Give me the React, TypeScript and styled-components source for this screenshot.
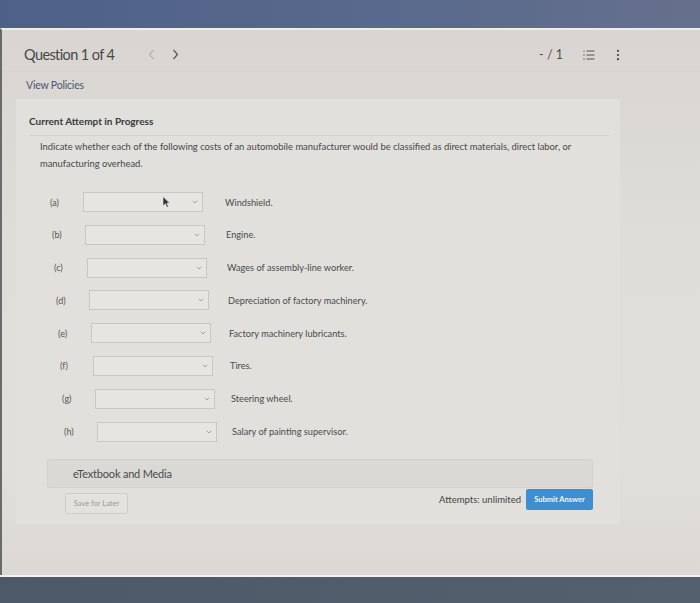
import React from "react";
import styled, { createGlobalStyle } from "styled-components";

const Global = createGlobalStyle`
  html, body { margin: 0; padding: 0; }
  body { width: 700px; height: 603px; overflow: hidden; font-family: Lato, "Open Sans", sans-serif; }
  #root { width: 700px; height: 603px; }
`;

const Page = styled.div`
  display: flex;
  flex-direction: column;
  width: 700px;
  height: 603px;
  background: #4f5b6b;
`;

const TopBezel = styled.div`
  height: 28px;
  flex: none;
  background: linear-gradient(to right, #4f6088, #5a6a8d 60%, #65708c);
`;

const Screen = styled.div`
  flex: none;
  height: 547px;
  box-sizing: border-box;
  border-top: 2px solid #eeedea;
  border-left: 2px solid #6a6a6a;
  background: linear-gradient(to bottom, #d9d6d2, #dfddd9 40%, #e1dfda 80%, #dcd9d4);
  display: flex;
  flex-direction: column;
`;

const BottomBezel = styled.div`
  flex: 1;
  border-top: 2px solid #f2f2f0;
  background: linear-gradient(to right, #4d5868, #55606f);
`;

const Header = styled.div`
  display: flex;
  align-items: center;
  height: 42px;
  box-sizing: border-box;
  padding: 8px 80px 0 22px;
  border-bottom: 1px solid #d8d5d1;
`;

const Title = styled.div`
  font-size: 14.5px;
  color: #474747;
  letter-spacing: -0.6px;
`;

const NavArrow = styled.span<{ $dim?: boolean }>`
  display: inline-flex;
  margin-left: ${(p) => (p.$dim ? "34px" : "17px")};
  color: ${(p) => (p.$dim ? "#aaa" : "#555")};
`;

const HeaderRight = styled.div`
  margin-left: auto;
  display: flex;
  align-items: center;
  color: #555;
`;

const Score = styled.span`
  font-size: 12.5px;
  color: #505050;
`;

const IconSlot = styled.span<{ $gap: number }>`
  display: inline-flex;
  margin-left: ${(p) => p.$gap}px;
`;

const Policies = styled.div`
  margin: 6px 0 0 24px;
  font-size: 10.5px;
  line-height: 14px;
  color: #4c5670;
  letter-spacing: -0.2px;
`;

const Card = styled.div`
  margin: 7px 80px 0 14px;
  padding: 15px 0 0 13px;
  background: #e2e0dc;
  height: 410px;
`;

const CardTitle = styled.div`
  font-size: 10px;
  font-weight: 700;
  line-height: 14px;
  color: #3a3a3a;
  padding-bottom: 7px;
  border-bottom: 1px solid #d6d3cf;
  margin-right: 10px;
`;

const Prompt = styled.div`
  margin: 2px 20px 0 11px;
  font-size: 9.4px;
  line-height: 17px;
  color: #474747;
`;

const Rows = styled.div`
  display: flex;
  flex-direction: column;
  gap: 12.8px;
  margin-top: 20px;
`;

const Row = styled.div<{ $shift: number }>`
  display: grid;
  grid-template-columns: 33px 120px auto;
  align-items: center;
  height: 20px;
  padding-left: ${(p) => 21 + p.$shift}px;
`;

const Label = styled.span`
  font-size: 9px;
  color: #555;
`;

const Select = styled.div`
  position: relative;
  height: 20px;
  box-sizing: border-box;
  border: 1px solid #c9c7c3;
  background: #e7e5e1;
  display: flex;
  align-items: center;
  justify-content: flex-end;
  padding-right: 4px;
`;

const Cursor = styled.svg`
  position: absolute;
  left: 78px;
  top: 3px;
`;

const ItemText = styled.span<{ $gap: number }>`
  margin-left: ${(p) => p.$gap}px;
  font-size: 9.2px;
  color: #4a4a4a;
`;

const MediaBar = styled.div`
  margin: 17px 27px 0 18px;
  height: 29px;
  box-sizing: border-box;
  border: 1px solid #d4d2ce;
  border-radius: 2px;
  background: #dbd9d5;
  display: flex;
  align-items: center;
  padding-left: 25px;
  font-size: 11px;
  letter-spacing: -0.2px;
  color: #4a4a4a;
`;

const Footer = styled.div`
  display: flex;
  align-items: flex-start;
  margin: 1px 27px 0 36px;
`;

const SaveButton = styled.div`
  margin-top: 4px;
  width: 63px;
  height: 21px;
  box-sizing: border-box;
  border: 1px solid #d0ceca;
  border-radius: 2px;
  display: flex;
  align-items: center;
  justify-content: center;
  font-size: 7.5px;
  color: #9a9a9a;
  background: #e4e2de;
`;

const Attempts = styled.span`
  margin-left: auto;
  margin-top: 5px;
  font-size: 9.5px;
  color: #444;
`;

const Submit = styled.div`
  margin-left: 5px;
  width: 67px;
  height: 21px;
  border-radius: 2px;
  background: #3f8fd0;
  color: #f2f6fa;
  font-size: 7.5px;
  font-weight: 700;
  display: flex;
  align-items: center;
  justify-content: center;
`;

const Chevron = () => (
  <svg width="6" height="4" viewBox="0 0 6 4">
    <path d="M0.8 0.8 L3 3 L5.2 0.8" fill="none" stroke="#9a9a9a" strokeWidth="0.9" />
  </svg>
);

const items: [string, string, number][] = [
  ["(a)", "Windshield.", 0],
  ["(b)", "Engine.", 2],
  ["(c)", "Wages of assembly-line worker.", 4],
  ["(d)", "Depreciation of factory machinery.", 6],
  ["(e)", "Factory machinery lubricants.", 8],
  ["(f)", "Tires.", 10],
  ["(g)", "Steering wheel.", 12],
  ["(h)", "Salary of painting supervisor.", 14],
];

export default function App() {
  return (
    <>
      <Global />
      <Page>
        <TopBezel />
        <Screen>
          <Header>
            <Title>Question 1 of 4</Title>
            <NavArrow $dim>
              <svg width="7" height="11" viewBox="0 0 7 11">
                <path d="M5.5 1 L1.5 5.5 L5.5 10" fill="none" stroke="currentColor" strokeWidth="1.1" />
              </svg>
            </NavArrow>
            <NavArrow>
              <svg width="7" height="11" viewBox="0 0 7 11">
                <path d="M1.5 1 L5.5 5.5 L1.5 10" fill="none" stroke="currentColor" strokeWidth="1.2" />
              </svg>
            </NavArrow>
            <HeaderRight>
              <Score>- / 1</Score>
              <IconSlot $gap={20}>
                <svg width="12" height="12" viewBox="0 0 12 12">
                  <path d="M1 1.5 V3 M1 5 V7 M1 9 V11" stroke="#666" strokeWidth="0.9" />
                  <path d="M3.5 2 H11.5 M3.5 6 H11.5 M3.5 10 H11.5" stroke="#555" strokeWidth="1.1" />
                </svg>
              </IconSlot>
              <IconSlot $gap={21}>
                <svg width="4" height="12" viewBox="0 0 4 12">
                  <circle cx="2" cy="1.8" r="1.1" fill="#444" />
                  <circle cx="2" cy="6" r="1.1" fill="#444" />
                  <circle cx="2" cy="10.2" r="1.1" fill="#444" />
                </svg>
              </IconSlot>
            </HeaderRight>
          </Header>
          <Policies>View Policies</Policies>
          <Card>
            <CardTitle>Current Attempt in Progress</CardTitle>
            <Prompt>
              Indicate whether each of the following costs of an automobile manufacturer would be classified as direct materials, direct labor, or
              manufacturing overhead.
            </Prompt>
            <Rows>
              {items.map(([label, text, shift], i) => (
                <Row key={label} $shift={shift}>
                  <Label>{label}</Label>
                  <Select>
                    {i === 0 && (
                      <Cursor width="8" height="12" viewBox="0 0 8 12">
                        <path d="M1 0.5 L1 10 L3.3 7.8 L5 11.3 L6.4 10.6 L4.8 7.2 L7.6 7.1 Z" fill="#333" stroke="#eee" strokeWidth="0.6" />
                      </Cursor>
                    )}
                    <Chevron />
                  </Select>
                  <ItemText $gap={22 - shift / 2}>{text}</ItemText>
                </Row>
              ))}
            </Rows>
            <MediaBar>eTextbook and Media</MediaBar>
            <Footer>
              <SaveButton>Save for Later</SaveButton>
              <Attempts>Attempts: unlimited</Attempts>
              <Submit>Submit Answer</Submit>
            </Footer>
          </Card>
        </Screen>
        <BottomBezel />
      </Page>
    </>
  );
}
